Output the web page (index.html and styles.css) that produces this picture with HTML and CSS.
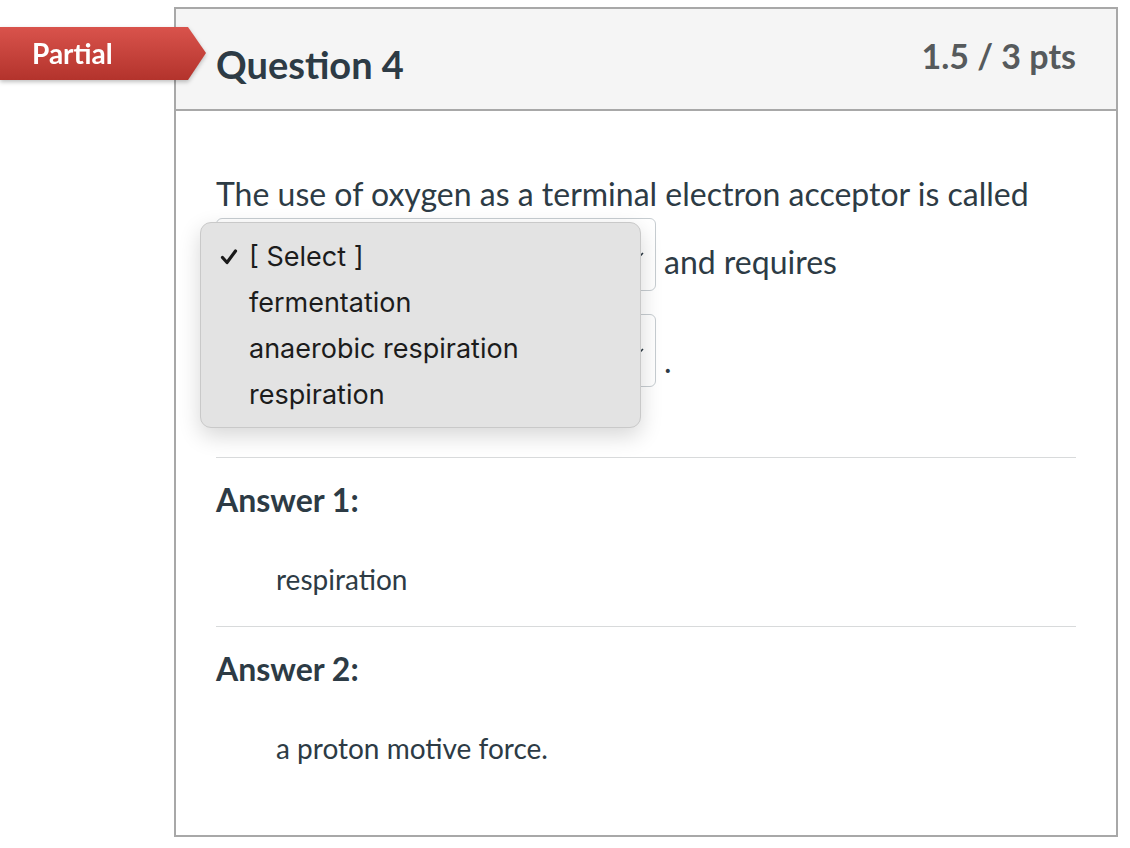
FILE: index.html
```html
<!DOCTYPE html>
<html>
<head>
<meta charset="utf-8">
<link rel="stylesheet" href="styles.css">
</head>
<body>
<div class="page">
  <div class="badge"><span>Partial</span></div>
  <div class="card">
    <div class="card-header">
      <h2 class="q-title">Question 4</h2>
      <div class="q-points">1.5 / 3 pts</div>
    </div>
    <div class="card-body">
      <p class="q-text">The use of oxygen as a terminal electron acceptor is called</p>
      <div class="fill-row row-one">
        <div class="select-box"><svg class="chev" width="14" height="10" viewBox="0 0 14 10"><path d="M2 3l5 5 5-5" fill="none" stroke="#2d3b45" stroke-width="1.6"/></svg></div>
        <span class="after after-one">and requires</span>
      </div>
      <div class="fill-row row-two">
        <div class="select-box"><svg class="chev" width="14" height="10" viewBox="0 0 14 10"><path d="M2 3l5 5 5-5" fill="none" stroke="#2d3b45" stroke-width="1.6"/></svg></div>
        <span class="after after-two">.</span>
      </div>

      <div class="answer">
        <h3 class="answer-label">Answer 1:</h3>
        <div class="answer-text">respiration</div>
      </div>
      <div class="answer">
        <h3 class="answer-label">Answer 2:</h3>
        <div class="answer-text">a proton motive force.</div>
      </div>
    </div>

    <ul class="menu">
      <li class="menu-item selected"><svg class="tick" width="18" height="16" viewBox="0 0 18 16"><path d="M2.5 8.5l4.5 5L15.5 2" fill="none" stroke="#1a1a1a" stroke-width="3.2" stroke-linecap="round" stroke-linejoin="round"/></svg>[ Select ]</li>
      <li class="menu-item">fermentation</li>
      <li class="menu-item">anaerobic respiration</li>
      <li class="menu-item">respiration</li>
    </ul>
  </div>
</div>
</body>
</html>
```

FILE: styles.css
```css
html, body {
  margin: 0;
  padding: 0;
  background: #ffffff;
}

body {
  font-family: Lato, "Noto Sans", sans-serif;
  color: #2d3b45;
}

.page {
  position: relative;
  padding: 7px 0 0 174px;
  width: 944px;
}

.card {
  position: relative;
  box-sizing: border-box;
  width: 944px;
  height: 830px;
  border: 2px solid #a8a8a8;
  background: #fff;
}

.card-header {
  box-sizing: border-box;
  height: 102px;
  background: #f5f5f5;
  border-bottom: 2px solid #a8a8a8;
  display: flex;
  justify-content: space-between;
  align-items: flex-start;
  padding: 0 40px;
}

.q-title {
  margin: 35px 0 0 0;
  font-size: 38px;
  font-weight: 700;
  line-height: 40px;
  color: #2d3b45;
}

.q-points {
  margin-top: 27px;
  font-size: 34px;
  font-weight: 700;
  line-height: 40px;
  color: #565a5c;
}

.card-body {
  padding: 63px 40px 0 40px;
}

.q-text {
  margin: 0;
  font-size: 32px;
  line-height: 40px;
}

.fill-row {
  display: flex;
  align-items: flex-start;
}

.row-one {
  margin-top: 4px;
}

.row-two {
  margin-top: 23px;
}

.select-box {
  position: relative;
  box-sizing: border-box;
  width: 440px;
  height: 73px;
  border: 1px solid #c7cdd1;
  border-radius: 6px;
  background: #fff;
}

.chev {
  position: absolute;
  right: 10px;
  top: 31px;
}

.after {
  margin-left: 8px;
  font-size: 32px;
  line-height: 40px;
}

.after-one {
  margin-top: 24px;
}

.after-two {
  margin-top: 27px;
}

.answer {
  border-top: 1px solid #d8dadb;
  margin-top: 70px;
}

.answer + .answer {
  margin-top: 29px;
}

.answer-label {
  margin: 22px 0 0 0;
  font-size: 32px;
  font-weight: 700;
  line-height: 40px;
}

.answer-text {
  margin: 41px 0 0 60px;
  font-size: 28px;
  line-height: 36px;
}

.menu {
  position: absolute;
  left: 24px;
  top: 213px;
  box-sizing: border-box;
  width: 441px;
  height: 206px;
  margin: 0;
  padding: 11px 0 10px 0;
  list-style: none;
  background: #e3e3e3;
  border: 1px solid #c9c9c9;
  border-radius: 11px;
  box-shadow: 0 8px 22px rgba(0, 0, 0, 0.16);
  font-family: Inter, "Liberation Sans", sans-serif;
  color: #1c1c1c;
}

.menu-item {
  height: 46px;
  line-height: 46px;
  font-size: 27px;
  padding-left: 48px;
  position: relative;
}

.tick {
  position: absolute;
  left: 19px;
  top: 15px;
}

.badge {
  position: absolute;
  left: 0;
  top: 27px;
  width: 206px;
  height: 53px;
  filter: drop-shadow(0 2px 2px rgba(0, 0, 0, 0.25));
  z-index: 2;
}

.badge::before {
  content: "";
  position: absolute;
  inset: 0;
  background: linear-gradient(#d9534c, #b3332c);
  clip-path: polygon(0 0, 188px 0, 206px 26px, 188px 53px, 0 53px);
}

.badge span {
  position: relative;
  display: block;
  padding-left: 32px;
  line-height: 53px;
  font-size: 28px;
  font-weight: 700;
  color: #fff;
}
```
